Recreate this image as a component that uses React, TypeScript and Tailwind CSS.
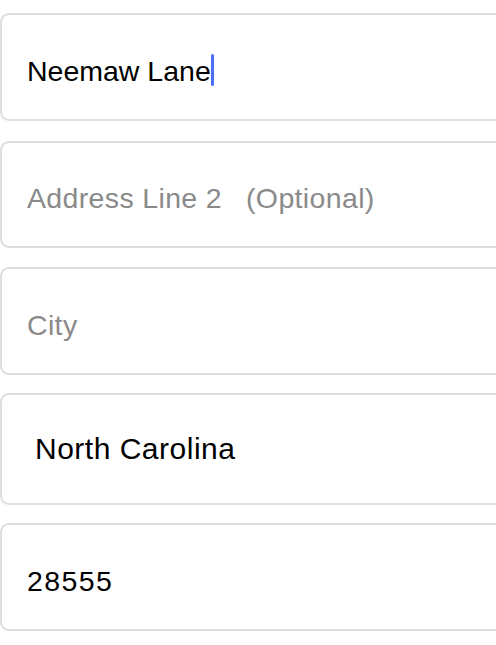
import React from 'react';

const Field = ({
  className,
  children,
}: {
  className?: string;
  children: React.ReactNode;
}) => (
  <div
    className={`flex items-center border-2 border-r-0 border-[#dedede] rounded-l-[9px] bg-white ${className ?? ''}`}
  >
    {children}
  </div>
);

export default function App() {
  return (
    <div
      className="w-[496px] h-[645px] bg-white overflow-hidden pt-[13px] text-[28.5px] tracking-[0.35px] leading-none"
      style={{ fontFamily: '"Liberation Sans", Arial, sans-serif' }}
    >
      <Field className="h-[108px] pl-[25px] pt-[9px]">
        <span className="text-black tracking-normal">Neemaw Lane</span>
        <span className="w-[3px] h-[32px] rounded-full bg-[#4b6ef2] -mt-[4px]" />
      </Field>

      <Field className="mt-[20px] h-[107px] pl-[25px] pt-[8px]">
        <span className="text-[#8a8a8a]">Address Line 2</span>
        <span className="text-[#8a8a8a] ml-[24px]">(Optional)</span>
      </Field>

      <Field className="mt-[19px] h-[108px] pl-[25px] pt-[8px]">
        <span className="text-[#8a8a8a]">City</span>
      </Field>

      <Field className="mt-[18px] h-[112px] pl-[33px]">
        <span className="text-black text-[30px] tracking-[0.5px]">North Carolina</span>
      </Field>

      <Field className="mt-[18px] h-[108px] pl-[25px] pt-[9px]">
        <span className="text-black tracking-[1.4px]">28555</span>
      </Field>
    </div>
  );
}
